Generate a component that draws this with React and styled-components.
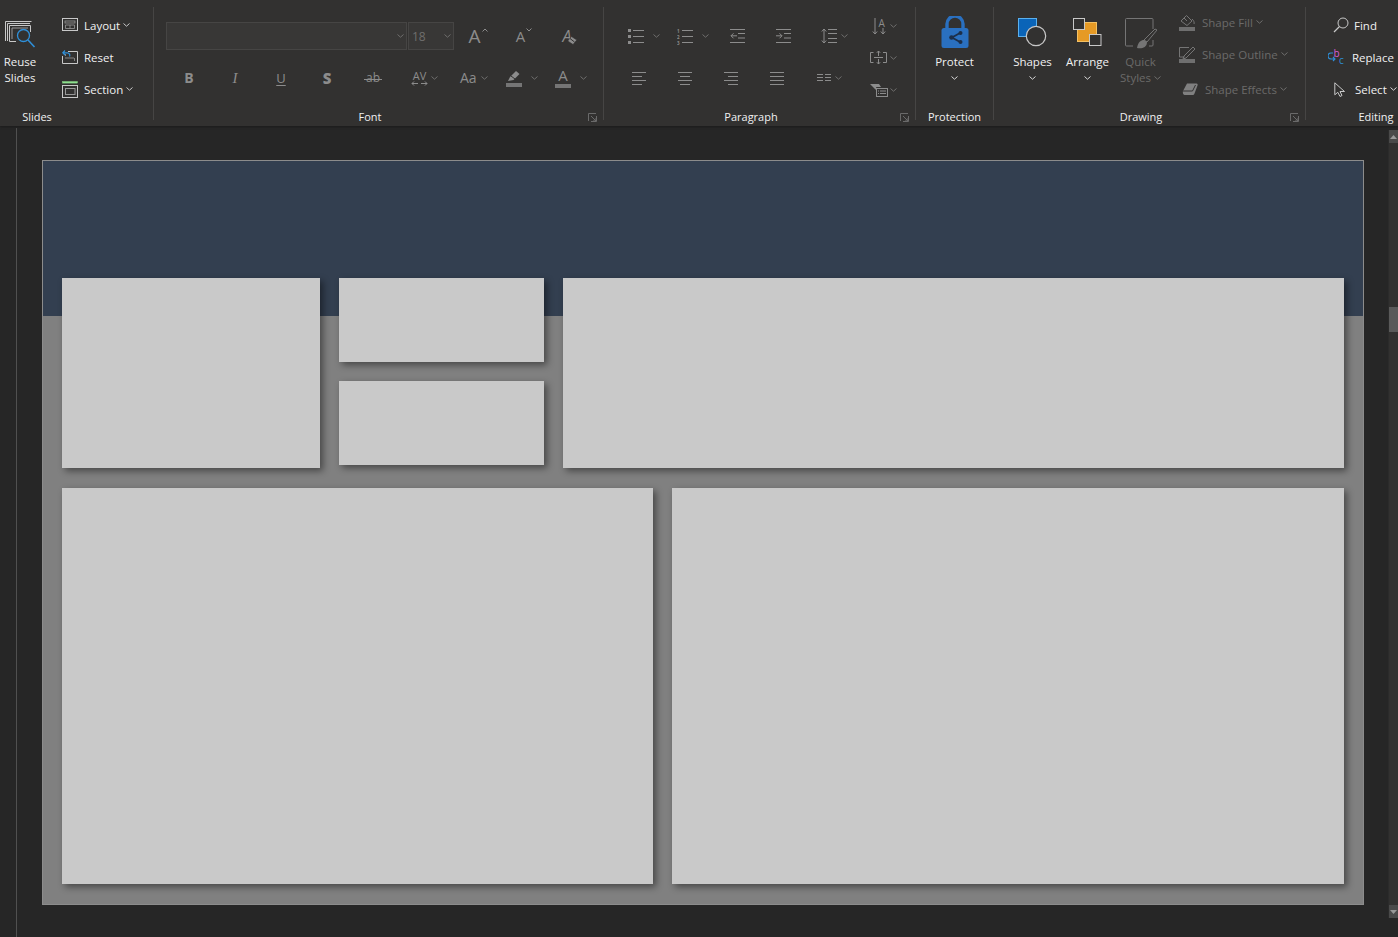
import React from "react";
import styled, { createGlobalStyle } from "styled-components";

const Global = createGlobalStyle`
  html, body { margin: 0; padding: 0; background: #262626; overflow: hidden; }
  body { font-family: "Open Sans", "Noto Sans", "Liberation Sans", sans-serif; }
`;

const Page = styled.div`
  width: 1398px; height: 937px; display: flex; flex-direction: column; background: #262626; overflow: hidden;
`;
const Ribbon = styled.div`
  height: 126px; flex: none; display: flex; background: #323130; box-shadow: 0 1px 2px #1b1b1b; position: relative; z-index: 1; overflow: hidden;
`;
const Separator = styled.div`
  width: 1px; flex: none; margin: 7px 0 6px; background: #464544;
`;
const Group = styled.div`
  width: ${p => p.$w}px; flex: none; display: flex; flex-direction: column; position: relative;
`;
const GroupBody = styled.div`
  height: 108px; display: flex; padding-left: ${p => p.$pl || 0}px;
`;
const GroupLabel = styled.div`
  height: 18px; line-height: 18px; font-size: 11px; color: #f0f0f0; text-align: center; white-space: nowrap;
  padding-left: ${p => p.$pl || 0}px; padding-right: ${p => p.$pr || 0}px;
`;
const Launcher = styled.svg`
  position: absolute; right: ${p => p.$r}px; bottom: 4px; width: 9px; height: 9px;
`;
const LargeButton = styled.div`
  width: ${p => p.$w}px; flex: none; display: flex; flex-direction: column; align-items: center;
  padding-top: ${p => p.$top ?? 16}px; margin-left: ${p => p.$ml || 0}px;
`;
const LargeIcon = styled.div`
  height: ${p => p.$h || 32}px; display: flex; align-items: flex-start; justify-content: center; margin-bottom: ${p => p.$mb ?? 6}px;
`;
const LargeText = styled.div`
  font-size: 11.5px; line-height: 16px; color: ${p => (p.$off ? "#6b6a69" : "#f0f0f0")}; text-align: center; white-space: nowrap;
  display: flex; align-items: center; justify-content: center; gap: 3px;
`;
const ChevronLine = styled.div`
  height: 15px; display: flex; align-items: center; justify-content: center;
`;
const SmallStack = styled.div`
  display: flex; flex-direction: column; padding-top: ${p => p.$top ?? 9}px; margin-left: ${p => p.$ml || 0}px; width: ${p => p.$w}px; flex: none;
`;
const SmallRow = styled.div`
  height: 32px; display: flex; align-items: center; margin-left: ${p => p.$ml || 0}px; margin-top: ${p => p.$mt || 0}px;
`;
const SmallIcon = styled.div`
  width: ${p => p.$w}px; flex: none; display: flex; align-items: center; justify-content: center;
`;
const SmallText = styled.span`
  font-size: 11.5px; color: ${p => (p.$off ? "#6b6a69" : "#f0f0f0")}; white-space: nowrap; margin: 0 3px 0 ${p => p.$gap ?? 6}px;
`;
const ToolRows = styled.div`
  display: flex; flex-direction: column; gap: 10px; padding-top: 20px; flex: none;
  width: ${p => p.$w}px;
`;
const ToolRow = styled.div`
  height: 32px; display: flex; align-items: center;
`;
const Tool = styled.div`
  width: ${p => p.$w || 46}px; height: 32px; flex: none; display: flex; align-items: center; justify-content: ${p => p.$j || "center"};
  gap: ${p => p.$gap ?? 6}px; position: relative; color: #8c8c8c; padding-left: ${p => p.$pl || 0}px; box-sizing: border-box;
`;
const Combo = styled.div`
  height: 28px; width: ${p => p.$w}px; flex: none; box-sizing: border-box; border: 1px solid #464544; background: #383736;
  display: flex; align-items: center; justify-content: space-between; padding: 0 2px 0 3px; margin-right: 1px;
  font-size: 12px; color: #6f6e6d;
`;
const GlyphText = styled.span`
  font-family: ${p => (p.$serif ? '"Liberation Serif", serif' : '"Open Sans", sans-serif')};
  font-size: ${p => p.$s || 12}px; font-weight: ${p => p.$b || 400}; font-style: ${p => (p.$i ? "italic" : "normal")};
  color: #8c8c8c; line-height: 1; text-decoration: ${p => (p.$u ? "underline" : "none")};
  text-underline-offset: 2px; display: inline-block;
`;
const StrikeGlyph = styled(GlyphText)`
  position: relative;
  &::after { content: ""; position: absolute; left: -2px; right: -2px; top: 55%; height: 1px; background: #8c8c8c; }
`;
const StackedGlyph = styled.span`
  display: inline-flex; flex-direction: column; align-items: center; line-height: 1;
`;
const ColorBar = styled.span`
  display: block; width: 16px; height: 4px; background: #757575; margin-top: 1px;
`;
const EraserMark = styled.svg`
  margin: 9px 0 0 -4px; width: 10px; height: 9px; flex: none;
`;

const Workspace = styled.div`
  flex: 1; display: flex; min-height: 0;
`;
const LeftRail = styled.div`
  width: 16px; flex: none; border-right: 1px solid #505050; margin-top: 2px;
`;
const Stage = styled.div`
  flex: 1; padding: 34px 0 0 25px; min-width: 0;
`;
const Slide = styled.div`
  width: 1322px; height: 745px; box-sizing: border-box; border: 1px solid #8c8c8c;
  background: linear-gradient(#333f50 0 155px, #808080 155px);
  padding: 117px 19px 0; display: flex; flex-direction: column; gap: 20px;
`;
const CardRow = styled.div`
  display: flex; gap: 19px; height: ${p => p.$h}px;
`;
const CardColumn = styled.div`
  display: flex; flex-direction: column; gap: 19px; width: ${p => p.$w}px; flex: none;
`;
const Card = styled.div`
  width: ${p => p.$w}px; height: ${p => p.$h}px; flex: none; background: #c9c9c9; box-shadow: 3px 3px 7px rgba(0,0,0,.45);
`;
const Scrollbar = styled.div`
  width: 10px; flex: none; margin: 4px 0 19px; background: #323130; display: flex; flex-direction: column; align-items: stretch; border-left: 1px solid #2b2b2b; box-sizing: border-box;
`;
const ScrollButton = styled.div`
  height: 13px; flex: none; background: #4a4a4a; display: flex; align-items: center; justify-content: center;
`;
const ScrollThumb = styled.div`
  height: 25px; flex: none; background: #5a5a5a; margin-top: ${p => p.$top}px; margin-bottom: auto;
`;

const G = "#8c8c8c";
const W = "#c8c8c8";
const BLUE = "#2f8fd8";

const Chev = ({ c = "#6f6e6d" }) => (
  <svg width="7" height="4" viewBox="0 0 7 4"><path d="M.5.5 3.5 3.2 6.5.5" fill="none" stroke={c} strokeWidth="1" /></svg>
);
const Launch = ({ r }) => (
  <Launcher $r={r} viewBox="0 0 9 9"><path d="M.5 8V.5H8M8.5 3v5.500H3M3 3l5 5M5 8h3V5" fill="none" stroke="#6a6a6a" /></Launcher>
);

const Lines = ({ rows, w = 16, h = 16 }) => (
  <svg width={w} height={h} viewBox={`0 0 ${w} ${h}`}>
    {rows.map(([x1, x2, y], i) => <rect key={i} x={x1} y={y} width={x2 - x1} height="1" fill={G} />)}
  </svg>
);

const ReuseIcon = () => (
  <svg width="31" height="28" viewBox="0 0 31 28" style={{ display: "block" }}>
    <path d="M.5 20V.5H26.5" fill="none" stroke={W} />
    <path d="M2.500 20V2.500H25" fill="none" stroke={W} />
    <path d="M11 20.500H4.500V4.500H25.500V11" fill="none" stroke={W} />
    <path d="M7 18V7H23" fill="none" stroke="#999" />
    <circle cx="18.500" cy="14.500" r="6" fill="none" stroke={BLUE} strokeWidth="1.300" />
    <path d="M23 19l6.500 7" stroke={BLUE} strokeWidth="1.600" />
  </svg>
);
const LayoutIcon = () => (
  <svg width="16" height="14" viewBox="0 0 16 14"><rect x=".5" y=".5" width="15" height="12" fill="none" stroke={W} /><rect x="3" y="3" width="10" height="2" fill="none" stroke="#999" strokeWidth=".8" /><path d="M3.500 7h9v3.500h-9zM8 7v3.500" fill="none" stroke="#999" strokeWidth=".8" /></svg>
);
const ResetIcon = () => (
  <svg width="16" height="14" viewBox="0 0 16 14"><path d="M6 1.500h9.500v12H.5V6" fill="none" stroke={W} /><path d="M3 8h9M3.500 4v2M12.500 8v3" stroke="#999" strokeWidth=".8" /><path d="M3 .5.8 2.800 3 5M1 2.800h4.500a2.500 2.500 0 0 1 2 3.700" fill="none" stroke={BLUE} strokeWidth="1.200" /></svg>
);
const SectionIcon = () => (
  <svg width="16" height="17" viewBox="0 0 16 17"><rect x=".5" y=".5" width="15" height="1.600" fill="#8ee08e" stroke="#8ee08e" strokeWidth=".4" /><rect x=".5" y="4.500" width="15" height="12" fill="none" stroke={W} /><rect x="3.500" y="7.500" width="9.500" height="6" fill="none" stroke="#999" /></svg>
);
const BulletIcon = () => (
  <svg width="16" height="16" viewBox="0 0 16 16"><g fill={G}><rect y="1" width="3" height="3" /><rect y="7" width="3" height="3" /><rect y="13" width="3" height="3" /><rect x="5" y="2" width="11" height="1" /><rect x="5" y="8" width="11" height="1" /><rect x="5" y="14" width="11" height="1" /></g></svg>
);
const NumberIcon = () => (
  <svg width="16" height="22" viewBox="0 0 16 22"><g fill={G} transform="translate(0 3)"><rect x="5" y="2" width="11" height="1" /><rect x="5" y="8" width="11" height="1" /><rect x="5" y="14" width="11" height="1" /><text x="0" y="4.500" fontSize="4.500" fontWeight="700" fontFamily="Open Sans">1</text><text x="0" y="10.500" fontSize="4.500" fontWeight="700" fontFamily="Open Sans">2</text><text x="0" y="16.500" fontSize="4.500" fontWeight="700" fontFamily="Open Sans">3</text></g></svg>
);
const IndentIcon = ({ out }) => (
  <svg width="15" height="14" viewBox="0 0 15 14"><g fill={G}><rect width="15" height="1" y="0" /><rect x="8" width="7" height="1" y="4" /><rect x="8" width="7" height="1" y="8.500" /><rect width="15" height="1" y="13" /></g>
    <path d={out ? "M7 6.800H1M3.500 4.300 1 6.800l2.500 2.500" : "M0 6.800h6M3.500 4.300 6 6.800 3.500 9.300"} fill="none" stroke={G} /></svg>
);
const LineSpaceIcon = () => (
  <svg width="16" height="16" viewBox="0 0 16 16"><g fill={G}><rect x="7" y="1" width="9" height="1" /><rect x="7" y="5" width="9" height="1" /><rect x="7" y="10" width="9" height="1" /><rect x="7" y="14" width="9" height="1" /></g><path d="M3 1v14M.8 3.500 3 1l2.200 2.500M.8 12.500 3 15l2.200-2.500" fill="none" stroke={G} /></svg>
);
const ColumnsIcon = () => (
  <svg width="14" height="8" viewBox="0 0 14 8"><g fill={G}>{[0, 3, 6].map(y => <React.Fragment key={y}><rect y={y} width="6" height="1" /><rect x="8" y={y} width="6" height="1" /></React.Fragment>)}</g></svg>
);
const TextDirIcon = () => (
  <svg width="16" height="18" viewBox="0 0 16 18">
    <path d="M3 1v16M.8 14.500 3 17l2.200-2.500M11 11v6M8.800 14.500 11 17l2.200-2.500" fill="none" stroke={G} />
    <text x="6.500" y="9.500" fontSize="10" fill={G} fontFamily="Open Sans">A</text>
  </svg>
);
const AlignTextIcon = () => (
  <svg width="17" height="16" viewBox="0 0 17 16"><path d="M3.500 2.500H.5v10h3M13 2.500h3.500v10H13" fill="none" stroke={G} /><path d="M8.500 1v5M6.800 2.800 8.500 1l1.700 1.800M8.500 9v5M6.800 12.200 8.500 14l1.700-1.800M4 7.500h9" fill="none" stroke={G} /></svg>
);
const SmartArtIcon = () => (
  <svg width="18" height="14" viewBox="0 0 18 14"><path d="M0 1h9l2 3H6l2 5-3-3z" fill={G} /><rect x="6.500" y="5.500" width="11" height="8" fill="#323130" stroke={G} /><path d="M8 8h1M10 8h6M8 10.500h1M10 10.500h6" stroke={G} /></svg>
);
const LockIcon = () => (
  <svg width="28" height="32" viewBox="0 0 28 32" style={{ display: "block" }}>
    <path d="M6 13V8a8 8 0 0 1 16 0v5" fill="none" stroke="#2a70c0" strokeWidth="3.400" />
    <rect x="0.500" y="12" width="27" height="20" rx="2.500" fill="#2a70c0" />
    <path d="M19 17l-8 4.500 8 4.500" fill="none" stroke="#1c2f4a" strokeWidth="1.800" />
    <circle cx="19.500" cy="17" r="2" fill="#1c2f4a" /><circle cx="19.500" cy="26" r="2" fill="#1c2f4a" /><circle cx="10.500" cy="21.500" r="2.300" fill="#1c2f4a" />
  </svg>
);
const ShapesIcon = () => (
  <svg width="29" height="29" viewBox="0 0 29 29" style={{ display: "block" }}>
    <rect x=".5" y=".5" width="18" height="18" fill="#0a64b8" stroke="#5ab0ee" />
    <circle cx="18" cy="18" r="9.700" fill="#323130" stroke={W} strokeWidth="1.200" />
  </svg>
);
const ArrangeIcon = () => (
  <svg width="29" height="28" viewBox="0 0 29 28" style={{ display: "block" }}>
    <rect x="4.500" y="4.500" width="19" height="19" fill="#e69a25" stroke="#f3c063" />
    <rect x=".5" y=".5" width="11" height="11" fill="#323130" stroke={W} />
    <rect x="16.500" y="16.500" width="11.500" height="11" fill="#323130" stroke={W} />
  </svg>
);
const QuickStylesIcon = () => (
  <svg width="32" height="32" viewBox="0 0 32 32" style={{ display: "block" }}>
    <path d="M8 28H1.500a1 1 0 0 1-1-1V1.500a1 1 0 0 1 1-1H27a1 1 0 0 1 1 1V11M28 22v5a1 1 0 0 1-1 1h-3" fill="none" stroke="#757575" />
    <path d="M30 11 19 22l3 2 10-12z" fill="none" stroke="#757575" />
    <path d="M19 22c-3 0-6 2-7 8 4 1 10 0 10-6z" fill="#757575" />
  </svg>
);
const ShapeFillIcon = () => (
  <svg width="16" height="17" viewBox="0 0 16 17"><path d="M2 7 7.500 1.500 13 7 8 11.500z" fill="none" stroke="#757575" /><path d="M13 5c2 1.500 2.500 4 2 5M5 4l3 3" fill="none" stroke="#757575" /><rect y="13" width="16" height="4" fill="#6f6f6f" /></svg>
);
const ShapeOutlineIcon = () => (
  <svg width="16" height="17" viewBox="0 0 16 17"><path d="M10 1.500H.5v9.500h5" fill="none" stroke="#757575" /><path d="M5 10 14 1l2 2-9 9-3 1z" fill="none" stroke="#757575" /><rect y="13" width="16" height="4" fill="#6f6f6f" /></svg>
);
const ShapeEffectsIcon = () => (
  <svg width="16" height="14" viewBox="0 0 16 14"><path d="M1 9 5 1.500h9.500c1 0 1.500 1 1 2l-3 8c-.5 1-1 1.500-2 1.500H2.500C1 13 .5 10.500 1 9z" fill="#808080" /><path d="M1 9h9.500l3-6" fill="none" stroke="#323130" /></svg>
);
const FindIcon = () => (
  <svg width="16" height="16" viewBox="0 0 16 16"><circle cx="10" cy="6" r="5" fill="none" stroke={W} /><path d="M6.500 9.500 1 15" stroke={W} strokeWidth="1.300" /></svg>
);
const ReplaceIcon = () => (
  <svg width="17" height="26" viewBox="0 0 17 26">
    <text x="5.500" y="12.500" fontSize="10" fill="#d65fd6" fontFamily="Open Sans">b</text>
    <text x="11" y="20" fontSize="10" fill={BLUE} fontFamily="Open Sans">c</text>
    <path d="M5 9H3a2.500 2.500 0 0 0 0 6h4M5 13l2 2-2 2" fill="none" stroke={BLUE} strokeWidth="1.100" />
  </svg>
);
const SelectIcon = () => (
  <svg width="11" height="15" viewBox="0 0 11 15"><path d="M.8.800v12l3-2.500L6 14.500 8 13.500 6 9.500h4.500z" fill="#323130" stroke={W} /></svg>
);

const AlignL = () => <Lines rows={[[0, 14, 1], [0, 10, 5], [0, 14, 9], [0, 10, 13]]} w={14} h={15} />;
const AlignC = () => <Lines rows={[[0, 14, 1], [2, 12, 5], [0, 14, 9], [2, 12, 13]]} w={14} h={15} />;
const AlignR = () => <Lines rows={[[0, 14, 1], [4, 14, 5], [0, 14, 9], [4, 14, 13]]} w={14} h={15} />;
const AlignJ = () => <Lines rows={[[0, 14, 1], [0, 14, 5], [0, 14, 9], [0, 14, 13]]} w={14} h={15} />;

export default function App() {
  return (
    <Page>
      <Global />
      <Ribbon>
        <Group $w={153}>
          <GroupBody>
            <LargeButton $w={40} $top={21}>
              <LargeIcon $h={27} $mb={6}><ReuseIcon /></LargeIcon>
              <LargeText>Reuse</LargeText>
              <LargeText>Slides</LargeText>
            </LargeButton>
            <SmallStack $ml={22} $w={90}>
              <SmallRow><SmallIcon $w={16}><LayoutIcon /></SmallIcon><SmallText>Layout</SmallText><Chev c="#c8c8c8" /></SmallRow>
              <SmallRow><SmallIcon $w={16}><ResetIcon /></SmallIcon><SmallText>Reset</SmallText></SmallRow>
              <SmallRow><SmallIcon $w={16}><SectionIcon /></SmallIcon><SmallText>Section</SmallText><Chev c="#c8c8c8" /></SmallRow>
            </SmallStack>
          </GroupBody>
          <GroupLabel $pr={79}>Slides</GroupLabel>
        </Group>
        <Separator />
        <Group $w={449}>
          <GroupBody $pl={12}>
            <ToolRows $w={437}>
              <ToolRow>
                <Combo $w={241}><span /><Chev /></Combo>
                <Combo $w={46}><span>18</span><Chev /></Combo>
                <Tool $w={46} $gap={1}><GlyphText $s={19}>A</GlyphText><svg width="6" height="4" viewBox="0 0 6 4" style={{ marginBottom: 12 }}><path d="M.5 3.500 3 1l2.500 2.500" fill="none" stroke={G} /></svg></Tool>
                <Tool $w={46} $gap={1}><GlyphText $s={15}>A</GlyphText><svg width="6" height="4" viewBox="0 0 6 4" style={{ marginBottom: 12 }}><path d="M.5.500 3 3l2.500-2.500" fill="none" stroke={G} /></svg></Tool>
                <Tool $w={46} $gap={0}><GlyphText $s={16} $i>A</GlyphText><EraserMark viewBox="0 0 10 9"><path d="M4.500.5 9.800 4 6 8.500.7 5z" fill="#8c8c8c" stroke="#323130" strokeWidth=".6" /><path d="M3 2.500 7.500 6" stroke="#323130" /></EraserMark></Tool>
              </ToolRow>
              <ToolRow>
                <Tool><GlyphText $b={700} $s={14}>B</GlyphText></Tool>
                <Tool><GlyphText $serif $i $s={15}>I</GlyphText></Tool>
                <Tool><GlyphText $u $s={13}>U</GlyphText></Tool>
                <Tool><GlyphText $b={800} $s={15}>S</GlyphText></Tool>
                <Tool><StrikeGlyph $s={12}>ab</StrikeGlyph></Tool>
                <Tool $gap={3} $pl={15} $j="flex-start"><StackedGlyph><GlyphText $s={11}>AV</GlyphText><svg width="17" height="5" viewBox="0 0 17 5"><path d="M7 2.500H1M3 .5 1 2.500l2 2M10 2.500h6M14 .5l2 2-2 2" fill="none" stroke={G} /></svg></StackedGlyph><Chev /></Tool>
                <Tool $w={50} $gap={4} $pl={18} $j="flex-start"><GlyphText $s={14}>Aa</GlyphText><Chev /></Tool>
                <Tool $gap={9} $pl={14} $j="flex-start"><StackedGlyph><svg width="14" height="12" viewBox="0 0 14 12"><path d="M1 11 3 7l6-6 3.500 3-6 6z" fill={G} /><path d="M4 6l4 3" stroke="#323130" /></svg><ColorBar /></StackedGlyph><Chev /></Tool>
                <Tool $w={52} $gap={9} $pl={17} $j="flex-start"><StackedGlyph><GlyphText $s={15}>A</GlyphText><ColorBar /></StackedGlyph><Chev /></Tool>
              </ToolRow>
            </ToolRows>
          </GroupBody>
          <GroupLabel $pr={17}>Font</GroupLabel>
          <Launch r={6} />
        </Group>
        <Separator />
        <Group $w={311}>
          <GroupBody $pl={12}>
            <ToolRows $w={254}>
              <ToolRow>
                <Tool $w={49} $gap={9} $pl={12} $j="flex-start"><BulletIcon /><Chev /></Tool>
                <Tool $w={49} $gap={9} $pl={12} $j="flex-start"><NumberIcon /><Chev /></Tool>
                <Tool><IndentIcon out /></Tool>
                <Tool><IndentIcon /></Tool>
                <Tool $gap={4} $pl={15} $j="flex-start"><LineSpaceIcon /><Chev /></Tool>
              </ToolRow>
              <ToolRow>
                <Tool><AlignL /></Tool>
                <Tool><AlignC /></Tool>
                <Tool><AlignR /></Tool>
                <Tool><AlignJ /></Tool>
                <Tool $gap={4} $pl={17} $j="flex-start"><ColumnsIcon /><Chev /></Tool>
              </ToolRow>
            </ToolRows>
            <SmallStack $w={40} $top={10}>
              <SmallRow><Tool $w={32} $gap={2} $pl={2} $j="flex-start"><TextDirIcon /><Chev /></Tool></SmallRow>
              <SmallRow><Tool $w={32} $gap={3} $j="flex-start"><AlignTextIcon /><Chev /></Tool></SmallRow>
              <SmallRow><Tool $w={32} $gap={2} $j="flex-start"><SmartArtIcon /><Chev /></Tool></SmallRow>
            </SmallStack>
          </GroupBody>
          <GroupLabel $pr={17}>Paragraph</GroupLabel>
          <Launch r={6} />
        </Group>
        <Separator />
        <Group $w={77}>
          <GroupBody>
            <LargeButton $w={77}>
              <LargeIcon><LockIcon /></LargeIcon>
              <LargeText>Protect</LargeText>
              <ChevronLine><Chev c="#d8d8d8" /></ChevronLine>
            </LargeButton>
          </GroupBody>
          <GroupLabel>Protection</GroupLabel>
        </Group>
        <Separator />
        <Group $w={311}>
          <GroupBody $pl={11}>
            <LargeButton $w={55} $top={18}>
              <LargeIcon $h={30}><ShapesIcon /></LargeIcon>
              <LargeText>Shapes</LargeText>
              <ChevronLine><Chev c="#d8d8d8" /></ChevronLine>
            </LargeButton>
            <LargeButton $w={55} $top={18}>
              <LargeIcon $h={30}><ArrangeIcon /></LargeIcon>
              <LargeText>Arrange</LargeText>
              <ChevronLine><Chev c="#d8d8d8" /></ChevronLine>
            </LargeButton>
            <LargeButton $w={51} $top={18}>
              <LargeIcon $h={30}><QuickStylesIcon /></LargeIcon>
              <LargeText $off>Quick</LargeText>
              <LargeText $off>Styles<Chev /></LargeText>
            </LargeButton>
            <SmallStack $top={6} $w={130} $ml={13}>
              <SmallRow><SmallIcon $w={16}><ShapeFillIcon /></SmallIcon><SmallText $off $gap={7}>Shape Fill</SmallText><Chev /></SmallRow>
              <SmallRow><SmallIcon $w={16}><ShapeOutlineIcon /></SmallIcon><SmallText $off $gap={7}>Shape Outline</SmallText><Chev /></SmallRow>
              <SmallRow $mt={3} $ml={3}><SmallIcon $w={16}><ShapeEffectsIcon /></SmallIcon><SmallText $off $gap={7}>Shape Effects</SmallText><Chev /></SmallRow>
            </SmallStack>
          </GroupBody>
          <GroupLabel $pr={17}>Drawing</GroupLabel>
          <Launch r={6} />
        </Group>
        <Separator />
        <Group $w={92}>
          <GroupBody $pl={22}>
            <SmallStack $w={70}>
              <SmallRow $ml={5}><SmallIcon $w={16}><FindIcon /></SmallIcon><SmallText $gap={5}>Find</SmallText></SmallRow>
              <SmallRow><SmallIcon $w={17}><ReplaceIcon /></SmallIcon><SmallText $gap={7}>Replace</SmallText></SmallRow>
              <SmallRow $ml={5}><SmallIcon $w={12}><SelectIcon /></SmallIcon><SmallText $gap={10}>Select</SmallText><Chev c="#d8d8d8" /></SmallRow>
            </SmallStack>
          </GroupBody>
          <GroupLabel $pl={48}>Editing</GroupLabel>
        </Group>
      </Ribbon>
      <Workspace>
        <LeftRail />
        <Stage>
          <Slide>
            <CardRow $h={190}>
              <Card $w={258} $h={190} />
              <CardColumn $w={205}>
                <Card $w={205} $h={84} />
                <Card $w={205} $h={84} />
              </CardColumn>
              <Card $w={781} $h={190} />
            </CardRow>
            <CardRow $h={396}>
              <Card $w={591} $h={396} />
              <Card $w={672} $h={396} />
            </CardRow>
          </Slide>
        </Stage>
        <Scrollbar>
          <ScrollButton><svg width="7" height="4" viewBox="0 0 7 4"><path d="M0 4 3.500 0 7 4z" fill="#999" /></svg></ScrollButton>
          <ScrollThumb $top={164} />
          <ScrollButton><svg width="7" height="4" viewBox="0 0 7 4"><path d="M0 0 3.500 4 7 0z" fill="#999" /></svg></ScrollButton>
        </Scrollbar>
      </Workspace>
    </Page>
  );
}
